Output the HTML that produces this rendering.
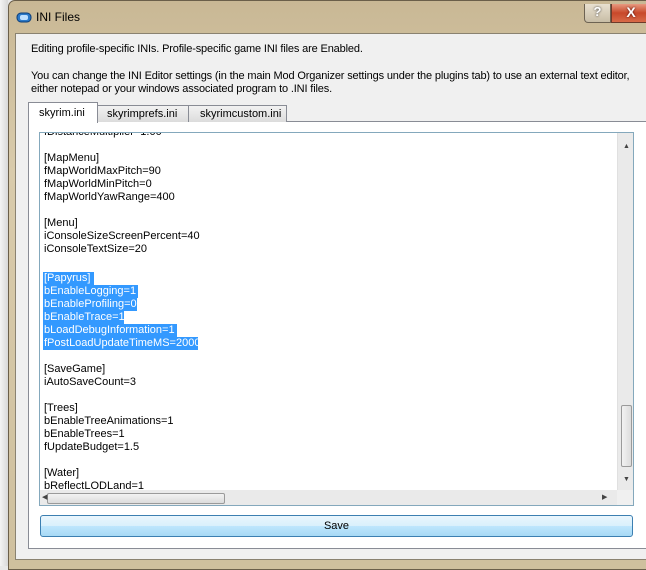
<!DOCTYPE html>
<html><head><style>
*{margin:0;padding:0;box-sizing:border-box}
body{width:646px;height:566px;overflow:hidden;position:relative;background:#e8e8e8;font-family:"Liberation Sans",sans-serif;font-size:11px;color:#000}
.abs{position:absolute;white-space:nowrap}
#frame{left:8px;top:0;width:660px;height:570px;background:linear-gradient(180deg,#c9b895 0%,#d9cbab 30%,#cfc09e 100%);border:1px solid #6b5f4a;border-radius:7px 7px 0 0}
#client{left:15px;top:33px;width:640px;height:527px;background:#f0f0f0;border:1px solid #8a8270}
.t{white-space:pre;line-height:13px}
.sel{background:#3399ff;color:#fff;height:13px}
.p{letter-spacing:-0.15px}
.tab{border:1px solid #898c95;border-bottom:none;background:linear-gradient(#f2f2f2,#dcdcdc)}
</style></head><body>
<div class="abs" style="left:0;top:0;width:8px;height:566px;background:linear-gradient(90deg,#f4f4f4,#d8d8d8)"></div>
<div id="frame" class="abs"></div>
<svg class="abs" style="left:16px;top:12px" width="16" height="11"><rect x="1" y="1" width="14" height="9" rx="4" fill="#2a78c8" stroke="#0d3e78"/><rect x="4" y="3" width="8" height="5" rx="2" fill="#bfe0ff"/></svg>
<div class="abs" style="left:36px;top:10px;font-size:12px;color:#000">INI Files</div>
<div class="abs" style="left:584px;top:4px;width:27px;height:19px;border:1px solid #6d6353;border-top:none;border-radius:0 0 0 4px;background:linear-gradient(#e8e0d0,#c8bda6);text-align:center;font-weight:bold;font-size:13px;color:#fff;text-shadow:0 0 2px #333">?</div>
<div class="abs" style="left:611px;top:4px;width:40px;height:19px;border:1px solid #6d3a2a;border-top:none;background:linear-gradient(#e89a80,#c8482a 50%,#d86a48);text-align:center;font-weight:bold;font-size:14px;color:#fff;text-shadow:0 0 2px #400">X</div>
<div id="client" class="abs"></div>
<div class="abs p" style="left:31px;top:43px">Editing profile-specific INIs. Profile-specific game INI files are Enabled.</div>
<div class="abs p" style="left:31px;top:70px">You can change the INI Editor settings (in the main Mod Organizer settings under the plugins tab) to use an external text editor,</div>
<div class="abs p" style="left:31px;top:83px">either notepad or your windows associated program to .INI files.</div>
<div class="abs" style="left:28px;top:121px;width:620px;height:428px;border:1px solid #898c95;background:#fff"></div>
<div class="abs tab" style="left:188px;top:105px;width:99px;height:17px"><span class="abs" style="left:11px;top:2px">skyrimcustom.ini</span></div>
<div class="abs tab" style="left:97px;top:105px;width:92px;height:17px"><span class="abs" style="left:9px;top:2px">skyrimprefs.ini</span></div>
<div class="abs" style="left:28px;top:102px;width:70px;height:21px;border:1px solid #898c95;border-bottom:none;background:#fff"><span class="abs" style="left:10px;top:4px">skyrim.ini</span></div>
<div class="abs" style="left:39px;top:132px;width:595px;height:374px;border:1px solid #84a8bc;background:#fff;overflow:hidden">
<div class="abs t" style="left:4px;top:-7px">fDistanceMultiplier=1.00

[MapMenu]
fMapWorldMaxPitch=90
fMapWorldMinPitch=0
fMapWorldYawRange=400

[Menu]
iConsoleSizeScreenPercent=40
iConsoleTextSize=20
</div>
<div class="abs sel" style="left:3px;top:139px;width:51px"></div>
<div class="abs sel" style="left:3px;top:152px;width:95px"></div>
<div class="abs sel" style="left:3px;top:165px;width:94px"></div>
<div class="abs sel" style="left:3px;top:178px;width:81px"></div>
<div class="abs sel" style="left:3px;top:191px;width:134px"></div>
<div class="abs sel" style="left:3px;top:204px;width:155px"></div>
<div class="abs t" style="left:4px;top:139px;color:#fff">[Papyrus]
bEnableLogging=1
bEnableProfiling=0
bEnableTrace=1
bLoadDebugInformation=1
fPostLoadUpdateTimeMS=2000</div>
<div class="abs t" style="left:4px;top:230px">[SaveGame]
iAutoSaveCount=3

[Trees]
bEnableTreeAnimations=1
bEnableTrees=1
fUpdateBudget=1.5

[Water]
bReflectLODLand=1</div>
<div class="abs" style="left:577px;top:0;width:17px;height:357px;background:#eaeaea;border-left:1px solid #e0e0e0"></div>
<div class="abs" style="left:581px;top:272px;width:11px;height:62px;border:1px solid #9a9a9a;border-radius:2px;background:linear-gradient(90deg,#f2f2f2,#dcdcdc)"></div>
<div class="abs" style="left:583px;top:10px;font-size:7px;color:#444">▲</div>
<div class="abs" style="left:583px;top:343px;font-size:7px;color:#444">▼</div>
<div class="abs" style="left:0;top:357px;width:577px;height:16px;background:#eaeaea"></div>
<div class="abs" style="left:7px;top:360px;width:178px;height:11px;border:1px solid #9a9a9a;border-radius:2px;background:linear-gradient(#f2f2f2,#dcdcdc)"></div>
<div class="abs" style="left:2px;top:360px;font-size:7px;color:#444">◀</div>
<div class="abs" style="left:562px;top:360px;font-size:7px;color:#444">▶</div>
<div class="abs" style="left:577px;top:357px;width:17px;height:16px;background:#f0f0f0"></div>
</div>
<div class="abs" style="left:40px;top:515px;width:593px;height:22px;border:1px solid #3c7fb1;border-radius:3px;background:linear-gradient(#eaf6fd,#d9f0fc 50%,#bee6fd 51%,#a7d9f5);text-align:center;line-height:20px">Save</div>
</body></html>
